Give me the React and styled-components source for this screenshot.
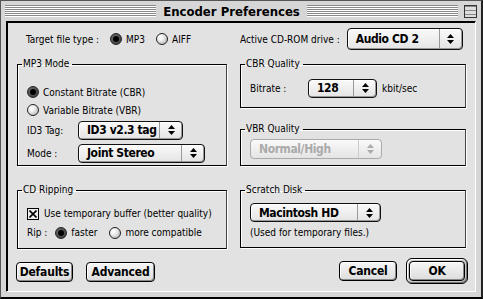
import React from 'react'
import styled, { createGlobalStyle, css } from 'styled-components'

const Global = createGlobalStyle`
    html, body {
        margin: 0;
        padding: 0;
        background: #dcdcdc;
    }
    body {
        width: 483px;
        height: 299px;
        overflow: hidden;
        font-family: "DejaVu Sans Condensed", "DejaVu Sans", sans-serif;
        font-size: 10px;
        color: #000;
    }
`

const bold = `"DejaVu Sans Condensed", "DejaVu Sans", sans-serif`

const Window = styled.div`
    width: 483px;
    height: 299px;
    box-sizing: border-box;
    background: #d6d6d6;
    border: 1px solid #555;
    border-bottom: 2px solid #000;
    border-right: 2px solid #222;
    display: flex;
    flex-direction: column;
`

const TitleBar = styled.div`
    height: 20px;
    display: flex;
    align-items: center;
    padding: 0 4px 0 4px;
    gap: 4px;
`

const Stripes = styled.div`
    flex: 1;
    height: 12px;
    background: repeating-linear-gradient(
        to bottom,
        #888 0px, #888 1px,
        #fff 1px, #fff 2px
    );
`

const Title = styled.div`
    font-family: ${bold};
    font-weight: bold;
    font-size: 13px;
    padding: 0 3px;
`

const CollapseBox = styled.div`
    width: 11px;
    height: 11px;
    border: 1px solid #333;
    background: linear-gradient(#888 0 1px, #ddd 1px 4px, #888 4px 5px, #ddd 5px 8px, #888 8px 9px, #ddd 9px);
    margin-left: 2px;
`

const Content = styled.div`
    flex: 1;
    margin: 0 5px 5px 5px;
    border: 1px solid #000;
    border-right-color: #fff;
    border-bottom-color: #fff;
    box-shadow: inset 1px 1px 0 #000;
    background: #e2e2e2;
    padding: 6px 10px 0 10px;
    display: grid;
    grid-template-columns: 210px 226px;
    column-gap: 13px;
    grid-template-rows: 22px auto auto auto;
    align-content: start;
    align-items: start;
`

const Row = styled.div`
    display: flex;
    align-items: center;
    gap: ${p => p.$gap || 0}px;
    padding-left: ${p => p.$indent || 0}px;
    margin-top: ${p => p.$mt || 0}px;
    height: ${p => p.$h ? p.$h + 'px' : 'auto'};
`

const Label = styled.span`
    white-space: nowrap;
    width: ${p => p.$w ? p.$w + 'px' : 'auto'};
    flex: none;
    color: ${p => p.$disabled ? '#999' : '#000'};
`

const Group = styled.fieldset`
    margin: ${p => p.$mt || 0}px 0 0 0;
    padding: 0 9px;
    border: 1px solid #000;
    border-right-color: #444;
    box-shadow: 1px 1px 0 #fff, inset 1px 1px 0 #fff;
    height: ${p => p.$h}px;
    box-sizing: border-box;
    min-width: 0;
    display: flex;
    flex-direction: column;
`

const Legend = styled.legend`
    padding: 0 3px 0 1px;
    margin-left: -5px;
    font-size: 10px;
    line-height: 10px;
`

const RadioDot = styled.span`
    width: 12px;
    height: 12px;
    box-sizing: border-box;
    border-radius: 50%;
    border: 1px solid #222;
    flex: none;
    display: inline-flex;
    align-items: center;
    justify-content: center;
    background: radial-gradient(circle at 35% 35%, #fff 0%, #f2f2f2 30%, #b8b8b8 80%, #999 100%);
    ${p => p.$on && css`
        background: radial-gradient(circle at 40% 40%, #777 0%, #444 70%, #333 100%);
        &::after {
            content: '';
            width: 6px;
            height: 6px;
            border-radius: 50%;
            background: #000;
        }
    `}
`

const Choice = styled.label`
    display: inline-flex;
    align-items: center;
    gap: 4px;
    white-space: nowrap;
`

const Check = styled.span`
    width: 12px;
    height: 12px;
    box-sizing: border-box;
    border: 1px solid #000;
    background: #eee;
    flex: none;
    display: inline-flex;
    align-items: center;
    justify-content: center;
`

const Popup = styled.div`
    width: ${p => p.$w}px;
    height: ${p => p.$h || 19}px;
    box-sizing: border-box;
    border: 1px solid ${p => p.$disabled ? '#aaa' : '#111'};
    border-radius: 4px;
    background: linear-gradient(#fafafa, #e4e4e4);
    box-shadow: ${p => p.$disabled ? 'none' : 'inset -1px -1px 0 #999, inset 1px 1px 0 #fff'};
    display: flex;
    align-items: stretch;
    flex: none;
    color: ${p => p.$disabled ? '#aaa' : '#000'};
`

const PopupText = styled.div`
    flex: 1;
    display: flex;
    align-items: center;
    padding-left: 8px;
    font-family: ${bold};
    font-weight: bold;
    font-size: 12px;
    letter-spacing: -0.4px;
    white-space: nowrap;
    overflow: hidden;
`

const PopupArrow = styled.div`
    width: 22px;
    border-left: 1px solid ${p => p.$disabled ? '#ccc' : '#999'};
    display: flex;
    align-items: center;
    justify-content: center;
`

const Note = styled.div`
    margin-top: 5px;
    white-space: nowrap;
`

const ButtonRow = styled.div`
    grid-column: ${p => p.$col};
    display: flex;
    align-items: center;
    justify-content: ${p => p.$end ? 'flex-end' : 'flex-start'};
    gap: ${p => p.$gap}px;
    padding-top: ${p => p.$pt}px;
    margin-left: ${p => p.$ml || 0}px;
    margin-right: ${p => p.$mr || 0}px;
`

const Button = styled.button`
    font-family: ${bold};
    font-weight: bold;
    font-size: 12px;
    letter-spacing: -0.2px;
    height: ${p => p.$h || 20}px;
    width: ${p => p.$w}px;
    padding: 0;
    box-sizing: border-box;
    border: 1px solid #000;
    border-radius: 4px;
    background: linear-gradient(#f6f6f6, #dcdcdc);
    box-shadow: inset -1px -1px 0 #888, inset 1px 1px 0 #fff;
    color: #000;
`

const DefaultRing = styled.div`
    padding: 2px;
    border: 1px solid #000;
    border-radius: 6px;
    background: #c8c8c8;
    box-shadow: inset 1px 1px 0 #fff, inset -1px -1px 0 #777;
    display: flex;
`

const Arrows = ({ color = '#000' }) => (
    <svg width="7" height="10" viewBox="0 0 7 10">
        <path d="M3.5 0 L7 4 L0 4 Z M0 6 L7 6 L3.5 10 Z" fill={color} />
    </svg>
)

const Select = ({ value, w, h, disabled }) => (
    <Popup $w={w} $h={h} $disabled={disabled}>
        <PopupText>{value}</PopupText>
        <PopupArrow $disabled={disabled}>
            <Arrows color={disabled ? '#aaa' : '#000'} />
        </PopupArrow>
    </Popup>
)

const Radio = ({ on, children }) => (
    <Choice>
        <RadioDot $on={on} />
        {children}
    </Choice>
)

const App = () => {
    return (
        <>
            <Global />
            <Window>
                <TitleBar>
                    <Stripes />
                    <Title>Encoder Preferences</Title>
                    <Stripes />
                    <CollapseBox />
                </TitleBar>
                <Content>
                    <Row $gap={11} $indent={9} $h={22}>
                        <Label>Target file type :</Label>
                        <Row $gap={11}>
                            <Radio on>MP3</Radio>
                            <Radio>AIFF</Radio>
                        </Row>
                    </Row>
                    <Row $gap={7} $h={22}>
                        <Label>Active CD-ROM drive :</Label>
                        <Select value="Audio CD 2" w={116} h={22} />
                    </Row>

                    <Group $mt={9} $h={107}>
                        <Legend>MP3 Mode</Legend>
                        <Row $h={18} $mt={14}>
                            <Radio on>Constant Bitrate (CBR)</Radio>
                        </Row>
                        <Row $h={18}>
                            <Radio>Variable Bitrate (VBR)</Radio>
                        </Row>
                        <Row $h={22}>
                            <Label $w={51}>ID3 Tag:</Label>
                            <Select value="ID3 v2.3 tag" w={105} />
                        </Row>
                        <Row $h={24}>
                            <Label $w={51}>Mode :</Label>
                            <Select value="Joint Stereo" w={127} />
                        </Row>
                    </Group>

                    <div>
                        <Group $mt={9} $h={49}>
                            <Legend>CBR Quality</Legend>
                            <Row $h={26} $mt={6}>
                                <Label $w={58}>Bitrate :</Label>
                                <Select value="128" w={69} />
                                <Label style={{ marginLeft: 5 }}>kbit/sec</Label>
                            </Row>
                        </Group>
                        <Group $mt={16} $h={42}>
                            <Legend>VBR Quality</Legend>
                            <Row $h={24} $mt={3}>
                                <Select value="Normal/High" w={132} h={20} disabled />
                            </Row>
                        </Group>
                    </div>

                    <Group $mt={19} $h={64}>
                        <Legend>CD Ripping</Legend>
                        <Row $h={19} $gap={5} $mt={9}>
                            <Check>
                                <svg width="8" height="8" viewBox="0 0 8 8">
                                    <path d="M0.5 0.5 L7.5 7.5 M7.5 0.5 L0.5 7.5" stroke="#000" strokeWidth="1.6" />
                                </svg>
                            </Check>
                            <Label>Use temporary buffer (better quality)</Label>
                        </Row>
                        <Row $h={19} $gap={8}>
                            <Label>Rip :</Label>
                            <Row $gap={12}>
                                <Radio on>faster</Radio>
                                <Radio>more compatible</Radio>
                            </Row>
                        </Row>
                    </Group>

                    <Group $mt={19} $h={63}>
                        <Legend>Scratch Disk</Legend>
                        <Row $mt={8}>
                            <Select value="Macintosh HD" w={131} />
                        </Row>
                        <Note>(Used for temporary files.)</Note>
                    </Group>

                    <ButtonRow $col={1} $gap={13} $ml={-1} $pt={13}>
                        <Button $w={57}>Defaults</Button>
                        <Button $w={69}>Advanced</Button>
                    </ButtonRow>
                    <ButtonRow $col={2} $gap={9} $end $mr={-2} $pt={9}>
                        <Button $w={58}>Cancel</Button>
                        <DefaultRing>
                            <Button $w={56}>OK</Button>
                        </DefaultRing>
                    </ButtonRow>
                </Content>
            </Window>
        </>
    )
}

export default App
